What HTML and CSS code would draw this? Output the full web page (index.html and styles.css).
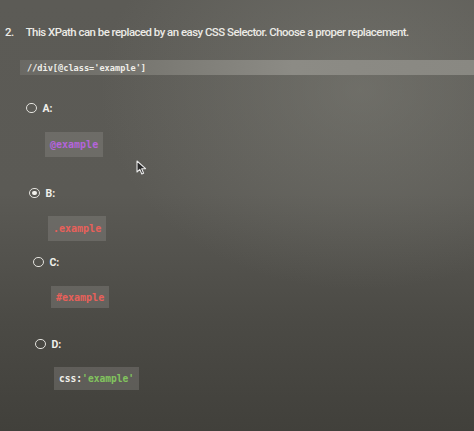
FILE: index.html
```html
<!DOCTYPE html>
<html>
<head>
<meta charset="utf-8">
<link rel="stylesheet" href="styles.css">
</head>
<body>
<div class="screen">
  <div class="question">
    <span class="qnum">2.</span>
    <span class="qtext">This XPath can be replaced by an easy CSS Selector. Choose a proper replacement.</span>
  </div>
  <div class="xpath"><code>//div[@class='example']</code></div>
  <div class="options">
    <div class="option opt-a">
      <div class="choice"><span class="radio"></span><span class="letter">A:</span></div>
      <div class="codebox box-a"><code class="purple">@example</code></div>
    </div>
    <div class="option opt-b">
      <div class="choice"><span class="radio checked"></span><span class="letter">B:</span></div>
      <div class="codebox box-b"><code class="red">.example</code></div>
    </div>
    <div class="option opt-c">
      <div class="choice"><span class="radio"></span><span class="letter">C:</span></div>
      <div class="codebox box-c"><code class="red">#example</code></div>
    </div>
    <div class="option opt-d">
      <div class="choice"><span class="radio"></span><span class="letter">D:</span></div>
      <div class="codebox box-d"><code><span class="white">css:</span><span class="green">'example'</span></code></div>
    </div>
  </div>
  <svg class="cursor" width="12" height="15" viewBox="0 0 12 15">
    <path d="M1 1 L1 12 L3.8 9.4 L5.8 14 L7.6 13.2 L5.7 8.8 L9.6 8.6 Z" fill="#2a2a2a" stroke="#e8e8e8" stroke-width="1.1" stroke-linejoin="round"/>
  </svg>
</div>
</body>
</html>
```
FILE: styles.css
```css
html, body {
  margin: 0;
  padding: 0;
}
body {
  width: 474px;
  height: 431px;
  overflow: hidden;
  font-family: Roboto, "Liberation Sans", sans-serif;
}
.screen {
  position: relative;
  width: 474px;
  height: 431px;
  box-sizing: border-box;
  padding-top: 24px;
  background:
    radial-gradient(ellipse 260px 200px at 360px 90px, rgba(140,140,132,0.4), rgba(140,140,132,0) 100%),
    linear-gradient(to bottom, #5c5b56 0%, #5b5a55 45%, #4b4a45 75%, #41403b 100%);
}
.question {
  display: flex;
  gap: 12px;
  padding-left: 5px;
  color: #ecebe6;
  font-size: 11.4px;
  font-weight: 500;
  line-height: 16px;
  letter-spacing: -0.5px;
}
.xpath {
  margin-top: 20px;
  margin-left: 20px;
  height: 15px;
  display: flex;
  align-items: center;
  padding-left: 7px;
  background: linear-gradient(to right, #6a6964 0%, #7a7973 30%, #8c8b85 60%, #898882 100%);
}
code {
  font-family: "DejaVu Sans Mono", "Liberation Mono", monospace;
}
.xpath code {
  font-size: 8.6px;
  color: #efeee9;
  font-weight: bold;
}
.options {
  display: flex;
  flex-direction: column;
}
.option {
  display: flex;
  flex-direction: column;
  align-items: flex-start;
}
.choice {
  display: flex;
  align-items: center;
  gap: 6px;
  height: 12px;
}
.radio {
  width: 8.5px;
  height: 8.5px;
  border: 1.4px solid #e3e2dd;
  border-radius: 50%;
  position: relative;
}
.radio.checked::after {
  content: "";
  position: absolute;
  left: 2px;
  top: 2px;
  width: 4.5px;
  height: 4.5px;
  border-radius: 50%;
  background: #f2f1ec;
}
.letter {
  color: #f0efea;
  font-size: 10.5px;
  font-weight: bold;
}
.codebox {
  display: flex;
  align-items: center;
  background: rgba(150,146,144,0.32);
  padding: 0 5px;
}
.codebox code {
  font-size: 10px;
  font-weight: bold;
}
.purple { color: #b464dc; }
.red { color: #e8605a; }
.green { color: #82c45e; }
.white { color: #f2f1ec; }

.opt-a { margin-top: 27px; padding-left: 26px; }
.box-a { margin-top: 18px; margin-left: 19px; height: 25px; }
.opt-b { margin-top: 30px; padding-left: 29px; }
.box-b { margin-top: 17px; margin-left: 19px; height: 25px; }
.opt-c { margin-top: 15px; padding-left: 33px; }
.box-c { margin-top: 18px; margin-left: 18px; height: 22px; }
.opt-d { margin-top: 30px; padding-left: 35px; }
.box-d { margin-top: 17px; margin-left: 19px; height: 23px; }
.box-d code { font-size: 9.6px; }

.cursor {
  position: absolute;
  left: 136px;
  top: 160px;
}
```
